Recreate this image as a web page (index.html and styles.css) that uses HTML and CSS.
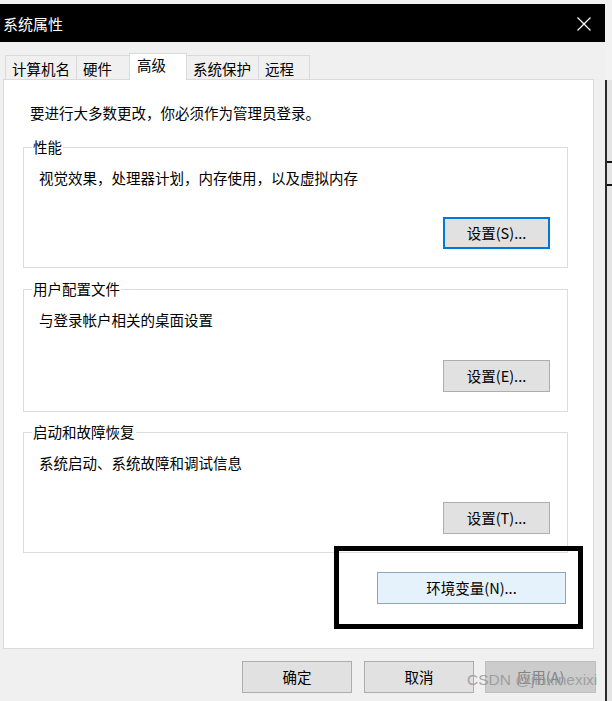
FILE: index.html
```html
<!DOCTYPE html>
<html lang="zh-CN">
<head>
<meta charset="utf-8">
<title>系统属性</title>
<link rel="stylesheet" href="styles.css">
</head>
<body>
<div class="screen">
  <div class="dialog">
    <div class="titlebar">
      <span class="title">系统属性</span>
      <svg class="close" width="14" height="14" viewBox="0 0 14 14"><path d="M0.5 0.5 L13.5 13.5 M13.5 0.5 L0.5 13.5" stroke="#fff" stroke-width="1.2" fill="none"/></svg>
    </div>
    <div class="body">
      <div class="tabs">
        <div class="tab t1">计算机名</div>
        <div class="tab t2">硬件</div>
        <div class="tab t3 active">高级</div>
        <div class="tab t4">系统保护</div>
        <div class="tab t5">远程</div>
      </div>
      <div class="panel">
        <div class="intro">要进行大多数更改，你必须作为管理员登录。</div>
        <fieldset class="group g1">
          <legend>性能</legend>
          <div class="desc">视觉效果，处理器计划，内存使用，以及虚拟内存</div>
          <div class="btnrow"><button class="btn focused">设置(S)...</button></div>
        </fieldset>
        <fieldset class="group g2">
          <legend>用户配置文件</legend>
          <div class="desc">与登录帐户相关的桌面设置</div>
          <div class="btnrow"><button class="btn">设置(E)...</button></div>
        </fieldset>
        <fieldset class="group g3">
          <legend>启动和故障恢复</legend>
          <div class="desc">系统启动、系统故障和调试信息</div>
          <div class="btnrow"><button class="btn">设置(T)...</button></div>
        </fieldset>
        <div class="envrow"><button class="btn env">环境变量(N)...</button></div>
      </div>
      <div class="footer">
        <button class="btn fbtn">确定</button>
        <button class="btn fbtn">取消</button>
        <button class="btn fbtn disabled">应用(A)</button>
      </div>
    </div>
  </div>
  <div class="side">
    <div class="bar b1"></div>
    <div class="bar b2"></div>
  </div>
  <div class="mark"></div>
  <div class="watermark">CSDN @jinxinexixi</div>
</div>
</body>
</html>
```

FILE: styles.css
```css
html, body {
  margin: 0;
  padding: 0;
}
body {
  font-family: "Noto Sans CJK SC", "Noto Sans", sans-serif;
  font-size: 14.5px;
  line-height: 18px;
  color: #000;
  background: #f2f2f2;
}
.screen {
  position: relative;
  width: 612px;
  height: 701px;
  display: flex;
  overflow: hidden;
  background: #f2f2f2;
}
.dialog {
  width: 605px;
  margin-top: 4px;
  display: flex;
  flex-direction: column;
  background: #f0f0f0;
}
.titlebar {
  height: 38px;
  background: #000;
  display: flex;
  align-items: center;
  justify-content: space-between;
  padding: 0 14px 0 3px;
  box-sizing: border-box;
}
.title {
  color: #fff;
  font-size: 15px;
  line-height: 18px;
  margin-top: 1px;
}
.close {
  display: block;
  margin-top: 1px;
}
.body {
  flex: 1;
  padding: 11px 9px 0 3px;
  display: flex;
  flex-direction: column;
}
.tabs {
  display: flex;
  align-items: flex-end;
  padding-left: 2px;
  height: 26px;
}
.tab {
  box-sizing: border-box;
  height: 24px;
  border: 1px solid #d9d9d9;
  border-bottom: none;
  background: #f0f0f0;
  padding: 4px 0 0 6px;
  white-space: nowrap;
  margin-left: -1px;
}
.t1 { width: 72px; margin-left: 0; }
.t2 { width: 54px; }
.t3 { width: 58px; }
.t4 { width: 73px; }
.t5 { width: 52px; }
.tab.active {
  position: relative;
  z-index: 1;
  height: 27px;
  margin-bottom: -1px;
  background: #fff;
  padding: 2px 0 0 7px;
}
.panel {
  box-sizing: border-box;
  width: 591px;
  height: 570px;
  background: #fff;
  border: 1px solid #d9d9d9;
  padding: 0 25px 0 19px;
  display: flex;
  flex-direction: column;
}
.intro {
  margin: 24px 0 0 7px;
}
.group {
  margin: 0;
  border: 1px solid #dcdcdc;
  padding: 13px 17px 18px 15px;
  min-width: 0;
}
.g1 { margin-top: 16px; }
.g2 { margin-top: 12px; padding-bottom: 19px; }
.g3 { margin-top: 11px; }
.group legend {
  padding: 0 1px;
  margin-left: -7px;
  line-height: 18px;
}
.btnrow {
  display: flex;
  justify-content: flex-end;
  margin-top: 30px;
}
.g2 .btnrow { margin-top: 31px; }
.btn {
  font-family: inherit;
  font-size: 14.5px;
  line-height: 18px;
  color: #000;
  box-sizing: border-box;
  height: 32px;
  width: 107px;
  margin: 0;
  padding: 0;
  background: #e1e1e1;
  border: 1px solid #adadad;
  border-radius: 0;
}
.btn.focused {
  border: 2px solid #0078d7;
}
.envrow {
  display: flex;
  justify-content: flex-end;
  margin-top: 19px;
  padding-right: 2px;
}
.btn.env {
  width: 189px;
  background: #e5f1fb;
  border: 1px solid #8ea4b8;
}
.footer {
  display: flex;
  justify-content: flex-end;
  margin-top: 12px;
  gap: 12px;
}
.fbtn {
  width: 110px;
}
.fbtn.disabled {
  width: 111px;
  margin-left: -1px;
  background: #cccccc;
  border-color: #bfbfbf;
  color: #838383;
}
.side {
  flex: 1;
  margin-top: 80px;
  border-left: 2px solid #2a2a2a;
  background: #e4e4e4;
  display: flex;
  flex-direction: column;
}
.bar {
  height: 2px;
  background: #111;
  margin-left: 0;
}
.b1 { margin-top: 81px; }
.b2 { margin-top: 21px; }
.mark {
  position: absolute;
  left: 334px;
  top: 546px;
  width: 249px;
  height: 83px;
  box-sizing: border-box;
  border: 5px solid #000;
}
.watermark {
  position: absolute;
  left: 467px;
  top: 671px;
  font-family: "Liberation Sans", sans-serif;
  font-size: 15.5px;
  line-height: 18px;
  color: rgba(150, 150, 150, 0.85);
  white-space: nowrap;
}
```
